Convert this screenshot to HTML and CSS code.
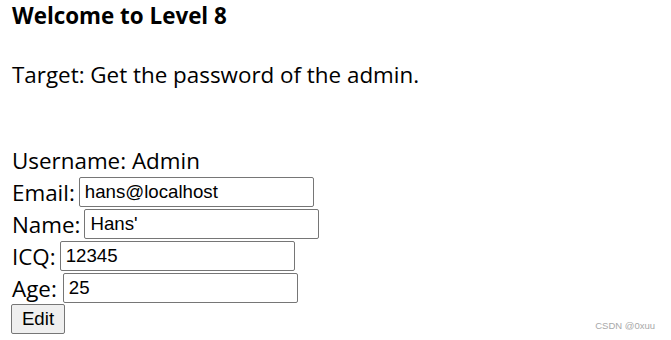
FILE: index.html
```html
<!DOCTYPE html>
<html>
<head>
<meta charset="utf-8">
<link rel="stylesheet" href="styles.css">
</head>
<body>
<div class="page">
  <h3 class="title">Welcome to Level 8</h3>
  <p class="target">Target: Get the password of the admin.</p>
  <form class="form">
    <div class="row plain">Username: Admin</div>
    <div class="row"><span class="lbl">Email:</span><input class="field" type="text" value="hans@localhost"></div>
    <div class="row"><span class="lbl">Name:</span><input class="field" type="text" value="Hans'"></div>
    <div class="row"><span class="lbl">ICQ:</span><input class="field" type="text" value="12345"></div>
    <div class="row"><span class="lbl lbl-age">Age:</span><input class="field" type="text" value="25"></div>
    <div class="row btnrow"><button class="btn" type="button">Edit</button></div>
  </form>
</div>
<div class="watermark">CSDN @0xuu</div>
</body>
</html>
```
FILE: styles.css
```css
html, body {
  margin: 0;
  padding: 0;
  background: #ffffff;
}
body {
  font-family: "Open Sans", "Noto Sans", sans-serif;
  color: #000;
  position: relative;
  width: 671px;
  height: 340px;
  overflow: hidden;
}
.page {
  padding-left: 12px;
}
.title {
  margin: 0;
  padding-top: 2px;
  font-size: 22.4px;
  font-weight: 700;
  line-height: 28px;
}
.target {
  margin: 30px 0 0 0;
  font-size: 22.4px;
  line-height: 30px;
}
.form {
  margin-top: 56px;
}
.row {
  display: flex;
  align-items: center;
  height: 32px;
  font-size: 22.4px;
}
.row.plain {
  height: 30px;
  line-height: 30px;
}
.lbl {
  margin-right: 4px;
}
.lbl-age {
  margin-right: 6px;
}
.field {
  box-sizing: border-box;
  width: 235px;
  height: 30px;
  border: 1px solid #767676;
  border-radius: 2px;
  padding: 0 5px;
  font-family: "Liberation Sans", Arial, sans-serif;
  font-size: 18.67px;
  color: #000;
  margin: 0;
}
.btnrow {
  margin-left: -1px;
  align-items: flex-start;
  height: 30px;
}
.btn {
  box-sizing: border-box;
  width: 54px;
  height: 30px;
  border: 1px solid #767676;
  border-radius: 2px;
  background: #efefef;
  font-family: "Liberation Sans", Arial, sans-serif;
  font-size: 18.67px;
  color: #000;
  padding: 0;
}
.watermark {
  position: absolute;
  right: 16px;
  bottom: 9px;
  font-family: "Liberation Sans", Arial, sans-serif;
  font-size: 9.5px;
  color: #a8a8a8;
}
```
